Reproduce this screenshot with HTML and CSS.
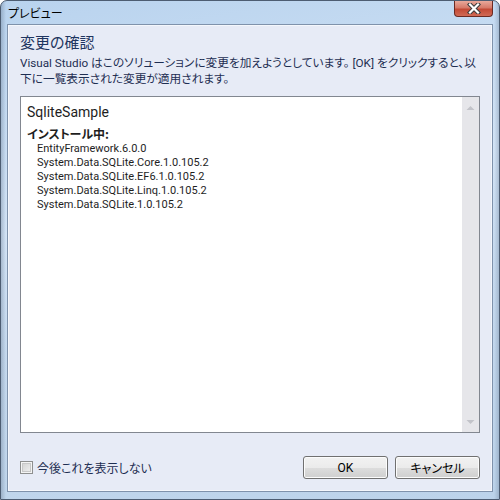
FILE: index.html
```html
<!DOCTYPE html>
<html lang="ja">
<head>
<meta charset="utf-8">
<link rel="stylesheet" href="styles.css">
</head>
<body>
<div class="window">
  <div class="titlebar">
    <span class="title">プレビュー</span>
    <div class="close">
      <svg width="14" height="11" viewBox="0 0 14 11">
        <path d="M3 1.5 L11 9.5 M11 1.5 L3 9.5" stroke="#3b3b3b" stroke-width="4.2" stroke-linecap="square" fill="none"/>
        <path d="M3 1.5 L11 9.5 M11 1.5 L3 9.5" stroke="#ffffff" stroke-width="2.2" stroke-linecap="square" fill="none"/>
      </svg>
    </div>
  </div>
  <div class="client">
    <div class="heading">変更の確認</div>
    <div class="desc">Visual Studio はこのソリューションに変更を加えようとしています。 [OK] をクリックすると、以<br>下に一覧表示された変更が適用されます。</div>
    <div class="listbox">
      <div class="list-content">
        <div class="project">SqliteSample</div>
        <div class="section">インストール中:</div>
        <div class="item">EntityFramework.6.0.0</div>
        <div class="item">System.Data.SQLite.Core.1.0.105.2</div>
        <div class="item">System.Data.SQLite.EF6.1.0.105.2</div>
        <div class="item">System.Data.SQLite.Linq.1.0.105.2</div>
        <div class="item">System.Data.SQLite.1.0.105.2</div>
      </div>
      <div class="scrollbar">
        <svg width="17" height="12" viewBox="0 0 17 12"><path d="M4.5 9 L8.5 5 L12.5 9 Z" fill="#c2c3c9"/></svg>
        <svg width="17" height="12" viewBox="0 0 17 12"><path d="M4.5 3 L8.5 7 L12.5 3 Z" fill="#c2c3c9"/></svg>
      </div>
    </div>
    <div class="footer">
      <label class="check"><span class="box"></span><span class="check-label">今後これを表示しない</span></label>
      <div class="buttons">
        <button class="btn">OK</button>
        <button class="btn">キャンセル</button>
      </div>
    </div>
  </div>
</div>
</body>
</html>
```

FILE: styles.css
```css
html, body {
  margin: 0;
  padding: 0;
}
body {
  width: 500px;
  height: 500px;
  overflow: hidden;
  font-family: Roboto, "Noto Sans CJK JP", sans-serif;
  font-feature-settings: "palt";
}
.window {
  box-sizing: border-box;
  width: 500px;
  height: 500px;
  border: 1px solid #4d5d72;
  border-radius: 7px 7px 0 0;
  background:
    linear-gradient(to right, rgba(90,110,135,0.35) 0, rgba(90,110,135,0) 5px, rgba(90,110,135,0) 493px, rgba(90,110,135,0.3) 498px),
    linear-gradient(170deg, #b9d3ee 0%, #d3e4f6 40%, #c6daef 60%, #bcd3ea 100%);
  display: flex;
  flex-direction: column;
  padding: 0 6px 7px 6px;
}
.titlebar {
  height: 23px;
  display: flex;
  justify-content: space-between;
  align-items: flex-start;
}
.title {
  font-family: "Noto Sans CJK JP", sans-serif;
  font-size: 12px;
  line-height: 17px;
  padding-top: 3px;
  padding-left: 1px;
  color: #000;
}
.close {
  width: 39px;
  height: 16px;
  box-sizing: border-box;
  border: 1px solid #6b2a22;
  border-top: none;
  border-radius: 0 0 4px 4px;
  background: linear-gradient(to bottom, #e9a99b 0%, #d67a69 45%, #c34a36 55%, #d06a55 100%);
  display: flex;
  align-items: center;
  justify-content: center;
}
.client {
  flex: 1;
  box-sizing: border-box;
  background: #e7ebf6;
  border: 1px solid #7f92ab;
  box-shadow: inset 0 0 0 1px #f4f7fc;
  display: flex;
  flex-direction: column;
  padding: 7px 12px 12px 12px;
}
.heading {
  font-family: "Noto Sans CJK JP", sans-serif;
  font-size: 15px;
  line-height: 20px;
  color: #1e3560;
}
.desc {
  font-size: 11.7px;
  line-height: 15.5px;
  color: #1e2e52;
  margin-top: 4px;
  white-space: nowrap;
}
.listbox {
  margin-top: 9px;
  height: 337px;
  box-sizing: border-box;
  border: 1px solid #828790;
  background: #fff;
  display: flex;
}
.list-content {
  flex: 1;
  padding: 5px 6px;
  color: #1e1e1e;
}
.project {
  font-size: 14px;
  line-height: 20px;
  margin-bottom: 3px;
}
.section {
  font-family: "Noto Sans CJK JP", sans-serif;
  font-size: 12px;
  line-height: 17px;
  font-weight: bold;
}
.item {
  font-size: 11px;
  line-height: 14px;
  padding-left: 10px;
}
.scrollbar {
  width: 17px;
  background: #e6e6ea;
  display: flex;
  flex-direction: column;
  justify-content: space-between;
  padding: 4px 0 3px 0;
}
.scrollbar svg {
  display: block;
}
.footer {
  margin-top: auto;
  display: flex;
  justify-content: space-between;
  align-items: center;
}
.check {
  display: flex;
  align-items: center;
  gap: 4px;
  font-family: "Noto Sans CJK JP", sans-serif;
  font-size: 12px;
  color: #1e2e52;
}
.box {
  width: 13px;
  height: 13px;
  box-sizing: border-box;
  border: 1px solid #8e8f8f;
  background: linear-gradient(135deg, #cfcfcf, #f3f3f3);
  box-shadow: inset 0 0 0 1px #f4f4f4, inset 0 0 0 2px #c8c8c8;
}
.buttons {
  display: flex;
  gap: 7px;
}
.btn {
  width: 85px;
  height: 23px;
  box-sizing: border-box;
  border: 1px solid #707070;
  border-radius: 3px;
  background: linear-gradient(to bottom, #f2f2f2 0%, #ebebeb 50%, #dddddd 51%, #cfcfcf 100%);
  box-shadow: inset 0 0 0 1px #fcfcfc;
  font-family: Roboto, "Noto Sans CJK JP", sans-serif;
  font-feature-settings: "palt";
  font-size: 12px;
  color: #000;
  padding: 0;
}
```
